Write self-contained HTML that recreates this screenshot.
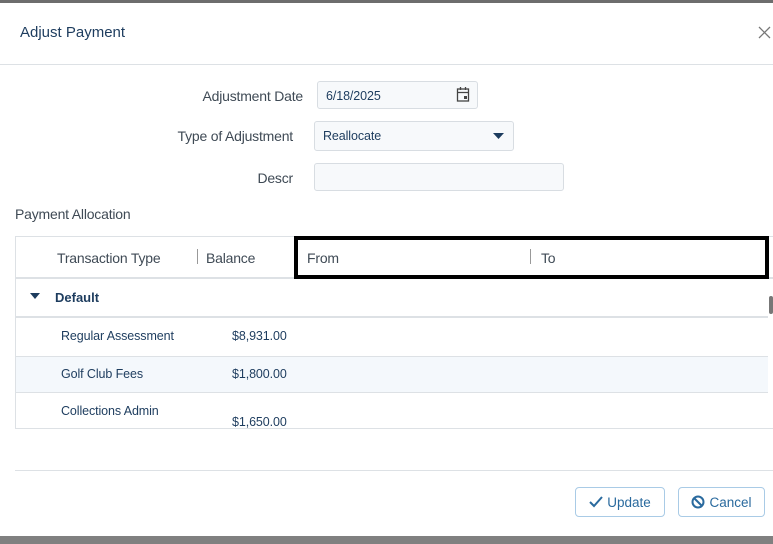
<!DOCTYPE html>
<html><head><meta charset="utf-8"><style>
*{box-sizing:border-box;margin:0;padding:0}
body{width:773px;height:544px;background:#fff;font-family:"Liberation Sans",sans-serif;position:relative;overflow:hidden;color:#1d3c5e}
.a{position:absolute;white-space:nowrap}
.lbl{color:#3f4a55;font-size:14px;letter-spacing:-0.2px}
.v{font-size:12.5px;color:#1d3c5e;letter-spacing:-0.1px}
.box{position:absolute;background:#f7f9fb;border:1px solid #d8dde2;border-radius:3px}
.hl{position:absolute;height:1px;background:#dde1e5}
.btn{position:absolute;border:1px solid #a9cbe6;border-radius:4px;background:#fff;font-size:13.5px;color:#2a6a9e;display:flex;align-items:center;justify-content:center;gap:4px}
</style></head><body>
<div class="a" style="left:0;top:0;width:773px;height:3px;background:#6d6d6d"></div>
<div class="a" style="left:0;top:536px;width:773px;height:8px;background:#808080"></div>
<div class="a" style="left:20px;top:24px;font-size:15px;color:#1d3c5e">Adjust Payment</div>
<svg class="a" style="left:758px;top:26px" width="13" height="13"><path d="M1 1L12 12M12 1L1 12" stroke="#777" stroke-width="1.3"/></svg>
<div class="hl" style="left:0;top:64px;width:773px"></div>

<div class="a lbl" style="right:470px;top:88px">Adjustment Date</div>
<div class="box" style="left:317px;top:81px;width:161px;height:28px"></div>
<div class="a v" style="left:326px;top:89px">6/18/2025</div>
<svg class="a" style="left:456px;top:86px" width="15" height="17"><rect x="1.5" y="3" width="11" height="12" fill="none" stroke="#444" stroke-width="1.3"/><path d="M1.5 6.5H12.5M4.5 1V4M9.5 1V4" stroke="#444" stroke-width="1.3"/><rect x="8" y="10" width="3" height="3" fill="#444"/></svg>

<div class="a lbl" style="right:480px;top:128px">Type of Adjustment</div>
<div class="box" style="left:314px;top:121px;width:200px;height:30px"></div>
<div class="a v" style="left:323px;top:129px">Reallocate</div>
<svg class="a" style="left:493px;top:133px" width="12" height="8"><path d="M0 0H11L5.5 6Z" fill="#1d3c5e"/></svg>

<div class="a lbl" style="right:480px;top:170px">Descr</div>
<div class="box" style="left:314px;top:163px;width:250px;height:28px"></div>

<div class="a lbl" style="left:15px;top:206px">Payment Allocation</div>

<div class="a" style="left:15px;top:236px;width:758px;height:193px;border:1px solid #dde1e5;border-right:none"></div>
<div class="hl" style="left:15px;top:277px;width:758px;height:2px"></div>
<div class="a lbl" style="left:57px;top:250px">Transaction Type</div>
<div class="a" style="left:197px;top:249px;width:1px;height:15px;background:#999"></div>
<div class="a lbl" style="left:206px;top:250px">Balance</div>
<div class="a" style="left:294px;top:236px;width:475px;height:43px;border:4px solid #000"></div>
<div class="a lbl" style="left:307px;top:250px">From</div>
<div class="a" style="left:530px;top:249px;width:1px;height:15px;background:#999"></div>
<div class="a lbl" style="left:541px;top:250px">To</div>

<svg class="a" style="left:30px;top:293px" width="11" height="8"><path d="M0 0H10L5 6Z" fill="#1d3c5e"/></svg>
<div class="a" style="left:55px;top:290px;font-size:13px;font-weight:bold;color:#1d3c5e">Default</div>
<div class="hl" style="left:15px;top:316px;width:753px;height:2px"></div>
<div class="a v" style="left:61px;top:329px">Regular Assessment</div>
<div class="a v" style="left:232px;top:329px">$8,931.00</div>
<div class="a" style="left:16px;top:356px;width:752px;height:37px;background:#f4f8fc;border-top:1px solid #dde1e5;border-bottom:1px solid #dde1e5"></div>
<div class="a v" style="left:61px;top:367px">Golf Club Fees</div>
<div class="a v" style="left:232px;top:367px">$1,800.00</div>
<div class="a v" style="left:61px;top:404px">Collections Admin</div>
<div class="a v" style="left:232px;top:415px">$1,650.00</div>
<div class="a" style="left:769px;top:296px;width:4px;height:18px;background:#777;border-radius:2px"></div>

<div class="hl" style="left:15px;top:470px;width:758px"></div>
<div class="btn" style="left:575px;top:487px;width:90px;height:30px"><svg width="14" height="12"><path d="M1 6L5 10L13 1" stroke="#2a6a9e" stroke-width="2" fill="none"/></svg>Update</div>
<div class="btn" style="left:678px;top:487px;width:87px;height:30px"><svg width="14" height="14"><circle cx="7" cy="7" r="5.5" stroke="#2a6a9e" stroke-width="2" fill="none"/><path d="M3 3L11 11" stroke="#2a6a9e" stroke-width="2"/></svg>Cancel</div>
</body></html>
